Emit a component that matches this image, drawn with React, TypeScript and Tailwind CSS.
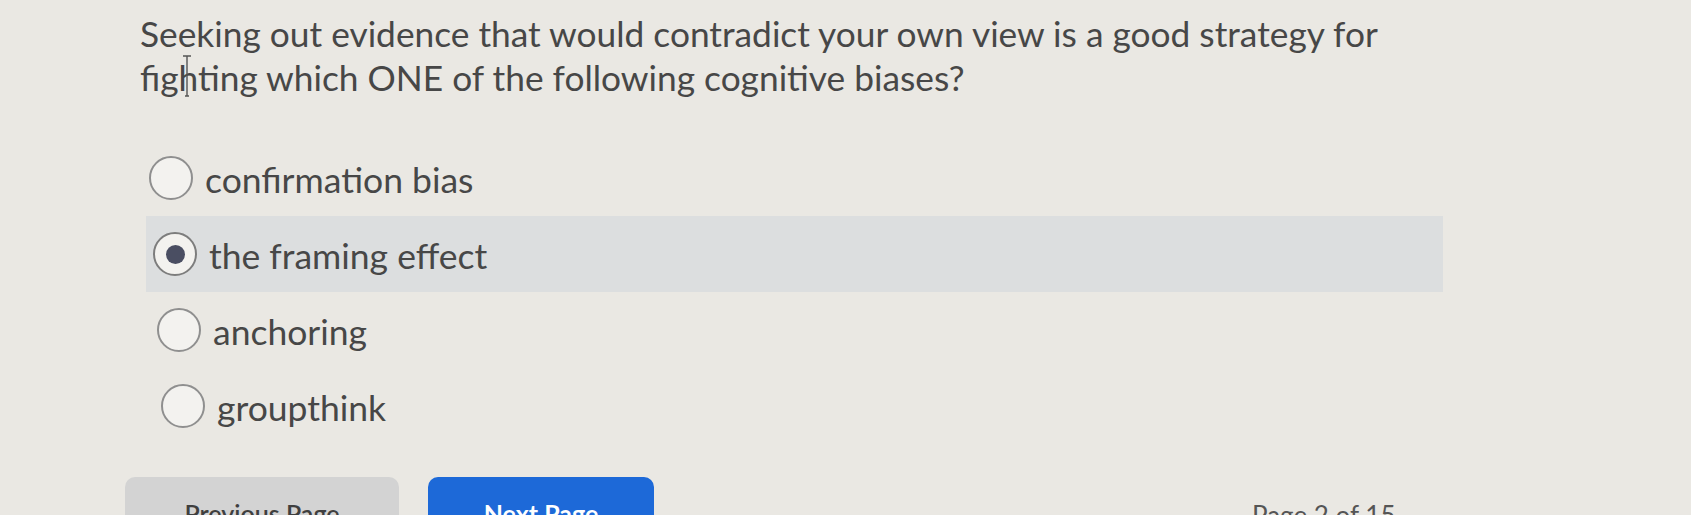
import { useState } from "react"

const options = ["confirmation bias", "the framing effect", "anchoring", "groupthink"]
// the photo is slightly skewed, so each row sits a few px further right
const shifts = ["ml-[0px]", "ml-[4px]", "ml-[8px]", "ml-[12px]"]

function Radio({ checked }: { checked: boolean }) {
  return (
    <span
      className={`flex h-[44px] w-[44px] shrink-0 items-center justify-center rounded-full border-2 bg-[#f3f2ef] ${
        checked ? "border-[#7d7d7d]" : "border-[#8f8f8f]"
      }`}
    >
      {checked && <span className="h-[19px] w-[19px] rounded-full bg-[#4a4e62]" />}
    </span>
  )
}

export default function App() {
  const [selected, setSelected] = useState(1)

  return (
    <div
      className="relative h-[515px] w-full overflow-hidden bg-[#eae8e3] text-[#474747]"
      style={{ fontFamily: "Lato, 'Open Sans', sans-serif" }}
    >
      {/* text cursor over the question */}
      <svg className="absolute left-[181px] top-[55px]" width="12" height="42" viewBox="0 0 12 42">
        <path d="M2 1h8M6 1v40M4 41h4" stroke="#555" strokeWidth="1.4" fill="none" />
      </svg>

      <div className="pl-[140px] pt-[12px]">
        <p className="max-w-[1290px] text-[35.3px] leading-[44px]">
          Seeking out evidence that would contradict your own view is a good strategy for fighting which ONE of the
          following cognitive biases?
        </p>

        <div className="ml-[6px] mt-[40px] w-[1297px]">
          {options.map((opt, i) => (
            <label
              key={opt}
              onClick={() => setSelected(i)}
              className={`flex h-[76px] cursor-pointer items-center ${i === selected ? "bg-[#dcdedf]" : ""}`}
            >
              <span className={`flex items-center gap-[12px] pl-[3px] ${shifts[i]}`}>
                <Radio checked={i === selected} />
                <span className="pt-[4px] text-[35.5px]">{opt}</span>
              </span>
            </label>
          ))}
        </div>

        <div className="ml-[-15px] mt-[33px] flex items-start">
          <button className="flex h-[80px] w-[274px] items-start justify-center rounded-[10px] bg-[#d3d3d3] pt-[18px] text-[25px] font-semibold text-[#3f3f3f]">
            Previous Page
          </button>
          <button className="ml-[29px] flex h-[80px] w-[226px] items-start justify-center rounded-[10px] bg-[#1d69d8] pt-[18px] text-[25px] font-bold text-white">
            Next Page
          </button>
          <span className="ml-[598px] pt-[19px] text-[26px] text-[#555]">Page 2 of 15</span>
        </div>
      </div>
    </div>
  )
}
